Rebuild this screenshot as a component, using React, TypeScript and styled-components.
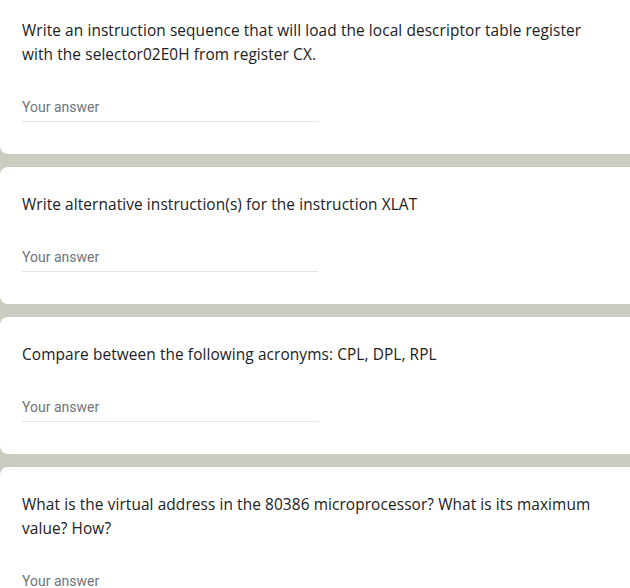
import { styled, createGlobalStyle } from "styled-components";

const GlobalStyle = createGlobalStyle`
    html, body {
        margin: 0;
        padding: 0;
        background: #c8ccc1;
    }
    body {
        width: 630px;
        height: 588px;
        overflow: hidden;
    }
`;

const questions = [
    "Write an instruction sequence that will load the local descriptor table register with the selector02E0H from register CX.",
    "Write alternative instruction(s) for the instruction XLAT",
    "Compare between the following acronyms: CPL, DPL, RPL",
    "What is the virtual address in the 80386 microprocessor? What is its maximum value? How?",
];

export default function App() {
    return (
        <>
            <GlobalStyle />
            <Page>
                {questions.map((q) => (
                    <Card key={q}>
                        <Question>{q}</Question>
                        <Answer>Your answer</Answer>
                    </Card>
                ))}
            </Page>
        </>
    );
}

const Page = styled.main`
    display: flex;
    flex-direction: column;
    row-gap: 13px;
    margin-top: -7px;
    margin-right: -12px;
`;

const Card = styled.section`
    background: #fff;
    border-radius: 8px;
    padding: 26px 22px 32px 22px;
`;

const Question = styled.p`
    margin: 0;
    max-width: 572px;
    color: #202124;
    font-family: "Open Sans", sans-serif;
    font-size: 15.4px;
    line-height: 24px;
    letter-spacing: 0.1px;
`;

const Answer = styled.div`
    margin-top: 28px;
    width: 296px;
    padding-bottom: 2px;
    border-bottom: 1px solid #e2e3e3;
    color: #70757a;
    font-family: Roboto, sans-serif;
    font-size: 14px;
    line-height: 24px;
`;
